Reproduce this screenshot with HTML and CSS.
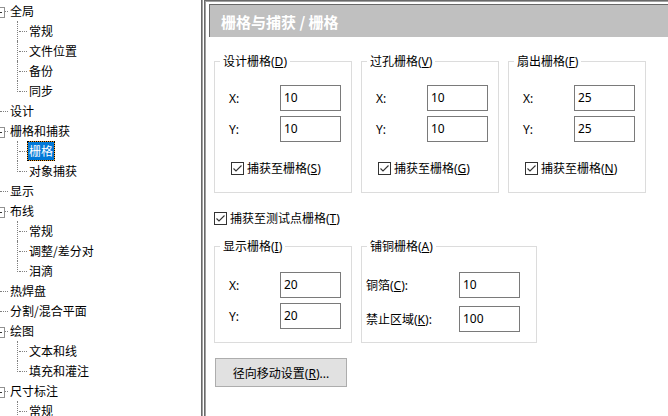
FILE: index.html
```html
<!DOCTYPE html>
<html lang="zh-CN">
<head>
    <meta charset="UTF-8">
    <title>栅格与捕获 / 栅格</title>
    <link rel="stylesheet" href="styles.css">
</head>
<body>
    <div class="window">
        <div class="tree">
            <div class="item root open">全局</div>
            <div class="item child">常规</div>
            <div class="item child">文件位置</div>
            <div class="item child">备份</div>
            <div class="item child last">同步</div>
            <div class="item root">设计</div>
            <div class="item root open">栅格和捕获</div>
            <div class="item child"><span class="selected">栅格</span></div>
            <div class="item child last">对象捕获</div>
            <div class="item root">显示</div>
            <div class="item root open">布线</div>
            <div class="item child">常规</div>
            <div class="item child">调整/差分对</div>
            <div class="item child last">泪滴</div>
            <div class="item root">热焊盘</div>
            <div class="item root">分割/混合平面</div>
            <div class="item root open">绘图</div>
            <div class="item child">文本和线</div>
            <div class="item child last">填充和灌注</div>
            <div class="item root open">尺寸标注</div>
            <div class="item child">常规</div>
        </div>

        <div class="page">
            <div class="page-title">栅格与捕获 / 栅格</div>

            <div class="page-body">
                <div class="group-row">
                    <div class="group">
                        <div class="group-title">设计栅格(<u>D</u>)</div>
                        <div class="group-body">
                            <div class="field"><span class="field-label">X:</span><input class="text-input" value="10"></div>
                            <div class="field"><span class="field-label">Y:</span><input class="text-input" value="10"></div>
                            <div class="check"><span class="box"><svg width="11" height="11" viewBox="0 0 11 11"><path d="M1.5 5.5 L4 8 L9.5 2.5" fill="none" stroke="#333" stroke-width="1.1"/></svg></span>捕获至栅格(<u>S</u>)</div>
                        </div>
                    </div>
                    <div class="group">
                        <div class="group-title">过孔栅格(<u>V</u>)</div>
                        <div class="group-body">
                            <div class="field"><span class="field-label">X:</span><input class="text-input" value="10"></div>
                            <div class="field"><span class="field-label">Y:</span><input class="text-input" value="10"></div>
                            <div class="check"><span class="box"><svg width="11" height="11" viewBox="0 0 11 11"><path d="M1.5 5.5 L4 8 L9.5 2.5" fill="none" stroke="#333" stroke-width="1.1"/></svg></span>捕获至栅格(<u>G</u>)</div>
                        </div>
                    </div>
                    <div class="group">
                        <div class="group-title">扇出栅格(<u>F</u>)</div>
                        <div class="group-body">
                            <div class="field"><span class="field-label">X:</span><input class="text-input" value="25"></div>
                            <div class="field"><span class="field-label">Y:</span><input class="text-input" value="25"></div>
                            <div class="check"><span class="box"><svg width="11" height="11" viewBox="0 0 11 11"><path d="M1.5 5.5 L4 8 L9.5 2.5" fill="none" stroke="#333" stroke-width="1.1"/></svg></span>捕获至栅格(<u>N</u>)</div>
                        </div>
                    </div>
                </div>

                <div class="check check-wide"><span class="box"><svg width="11" height="11" viewBox="0 0 11 11"><path d="M1.5 5.5 L4 8 L9.5 2.5" fill="none" stroke="#333" stroke-width="1.1"/></svg></span>捕获至测试点栅格(<u>T</u>)</div>

                <div class="group-row group-row-low">
                    <div class="group">
                        <div class="group-title">显示栅格(<u>I</u>)</div>
                        <div class="group-body display-body">
                            <div class="field"><span class="field-label">X:</span><input class="text-input" value="20"></div>
                            <div class="field"><span class="field-label">Y:</span><input class="text-input" value="20"></div>
                        </div>
                    </div>
                    <div class="group group-copper">
                        <div class="group-title">铺铜栅格(<u>A</u>)</div>
                        <div class="group-body copper-body">
                            <div class="field"><span class="field-label">铜箔(<u>C</u>):</span><input class="text-input" value="10"></div>
                            <div class="field"><span class="field-label">禁止区域(<u>K</u>):</span><input class="text-input" value="100"></div>
                        </div>
                    </div>
                </div>

                <button class="button">径向移动设置(<u>R</u>)...</button>
            </div>
        </div>
    </div>
</body>
</html>
```

FILE: styles.css
```css
* {
    margin: 0;
    padding: 0;
    box-sizing: border-box;
}

body {
    width: 668px;
    height: 416px;
    overflow: hidden;
    background: #fff;
    color: #000;
    font-family: "Noto Sans", "Noto Sans CJK SC", sans-serif;
    font-size: 12px;
}

.window {
    display: flex;
    height: 416px;
    gap: 1px;
}

/* Tree */
.tree {
    width: 203px;
    flex: none;
    padding-top: 1px;
    border-right: 1px solid #a0a0a0;
    box-shadow: inset -1px 0 #696969;
    font-family: "Noto Sans CJK SC", sans-serif;
    overflow: hidden;
}

.item {
    position: relative;
    height: 20px;
    line-height: 20px;
    padding-left: 10px;
    white-space: nowrap;
}

.item.root::before {
    content: '';
    position: absolute;
    left: 0;
    top: 10px;
    width: 8px;
    border-top: 1px dotted #808080;
}

.item.open::before {
    left: 4px;
    width: 4px;
}

.item.open::after {
    content: '';
    position: absolute;
    left: -6px;
    top: 6px;
    width: 9px;
    height: 9px;
    border: 1px solid #919191;
    background: linear-gradient(#333, #333) center / 5px 1px no-repeat, #fff;
}

.item.child {
    padding-left: 29px;
}

.item.child::before {
    content: '';
    position: absolute;
    left: 17px;
    top: 0;
    height: 20px;
    border-left: 1px dotted #808080;
}

.item.child.last::before {
    height: 11px;
}

.item.child::after {
    content: '';
    position: absolute;
    left: 19px;
    top: 10px;
    width: 8px;
    border-top: 1px dotted #808080;
}

.selected {
    display: inline-block;
    height: 20px;
    line-height: 18px;
    margin-left: -2px;
    padding: 0 1px;
    color: #fff;
    border: 1px dotted #000;
    background: linear-gradient(#0078d7, #0078d7) padding-box, #f0a030 border-box;
}

/* Page */
.page {
    flex: 1;
    padding: 3px 0 0 3px;
    border-top: 1px solid #696969;
    border-left: 1px solid #696969;
    box-shadow: inset 1px 1px #a0a0a0;
}

.page-title {
    height: 33px;
    padding: 2px 0 0 11px;
    line-height: 30px;
    color: #fff;
    font-family: "Noto Sans CJK SC", sans-serif;
    font-size: 15px;
    font-weight: bold;
    background: #c0c0c0;
    border-top: 1px solid #696969;
    border-left: 1px solid #696969;
    margin-left: 1px;
}

.page-body {
    padding-left: 6px;
}

.group-row {
    display: flex;
    gap: 9px;
    margin-top: 24px;
}

.group-row-low {
    margin-top: 19px;
}

.group {
    width: 138px;
    border: 1px solid #dcdcdc;
}

.group-copper {
    width: 176px;
}

.group-title {
    width: fit-content;
    height: 17px;
    margin: -9px 0 0 5px;
    padding: 0 3px;
    line-height: 17px;
    background: #fff;
}

.group-body {
    display: flex;
    flex-direction: column;
    gap: 5px;
    padding: 15px 0 15px 14px;
}

.display-body {
    padding: 17px 0 13px 14px;
}

.copper-body {
    gap: 8px;
    padding: 17px 0 10px 4px;
}

.field {
    display: flex;
    align-items: center;
    height: 26px;
}

.field-label {
    width: 51px;
    flex: none;
}

.copper-body .field-label {
    width: 93px;
}

.text-input {
    width: 61px;
    height: 26px;
    padding: 0 0 2px 3px;
    border: 1px solid #7a7a7a;
    font: inherit;
    font-size: 12px;
    color: #000;
    outline: none;
}

.check {
    display: flex;
    align-items: center;
    height: 17px;
    line-height: 17px;
    margin: 13px 0 0 2px;
    white-space: nowrap;
}

.box {
    display: flex;
    align-items: center;
    justify-content: center;
    width: 13px;
    height: 13px;
    margin-right: 3px;
    border: 1px solid #333;
    background: #fff;
}

.check-wide {
    margin: 17px 0 0 0;
}

.button {
    display: block;
    width: 132px;
    height: 29px;
    margin: 15px 0 0 1px;
    border: 1px solid #adadad;
    background: #e1e1e1;
    font: inherit;
    font-size: 12px;
    color: #000;
}
```
